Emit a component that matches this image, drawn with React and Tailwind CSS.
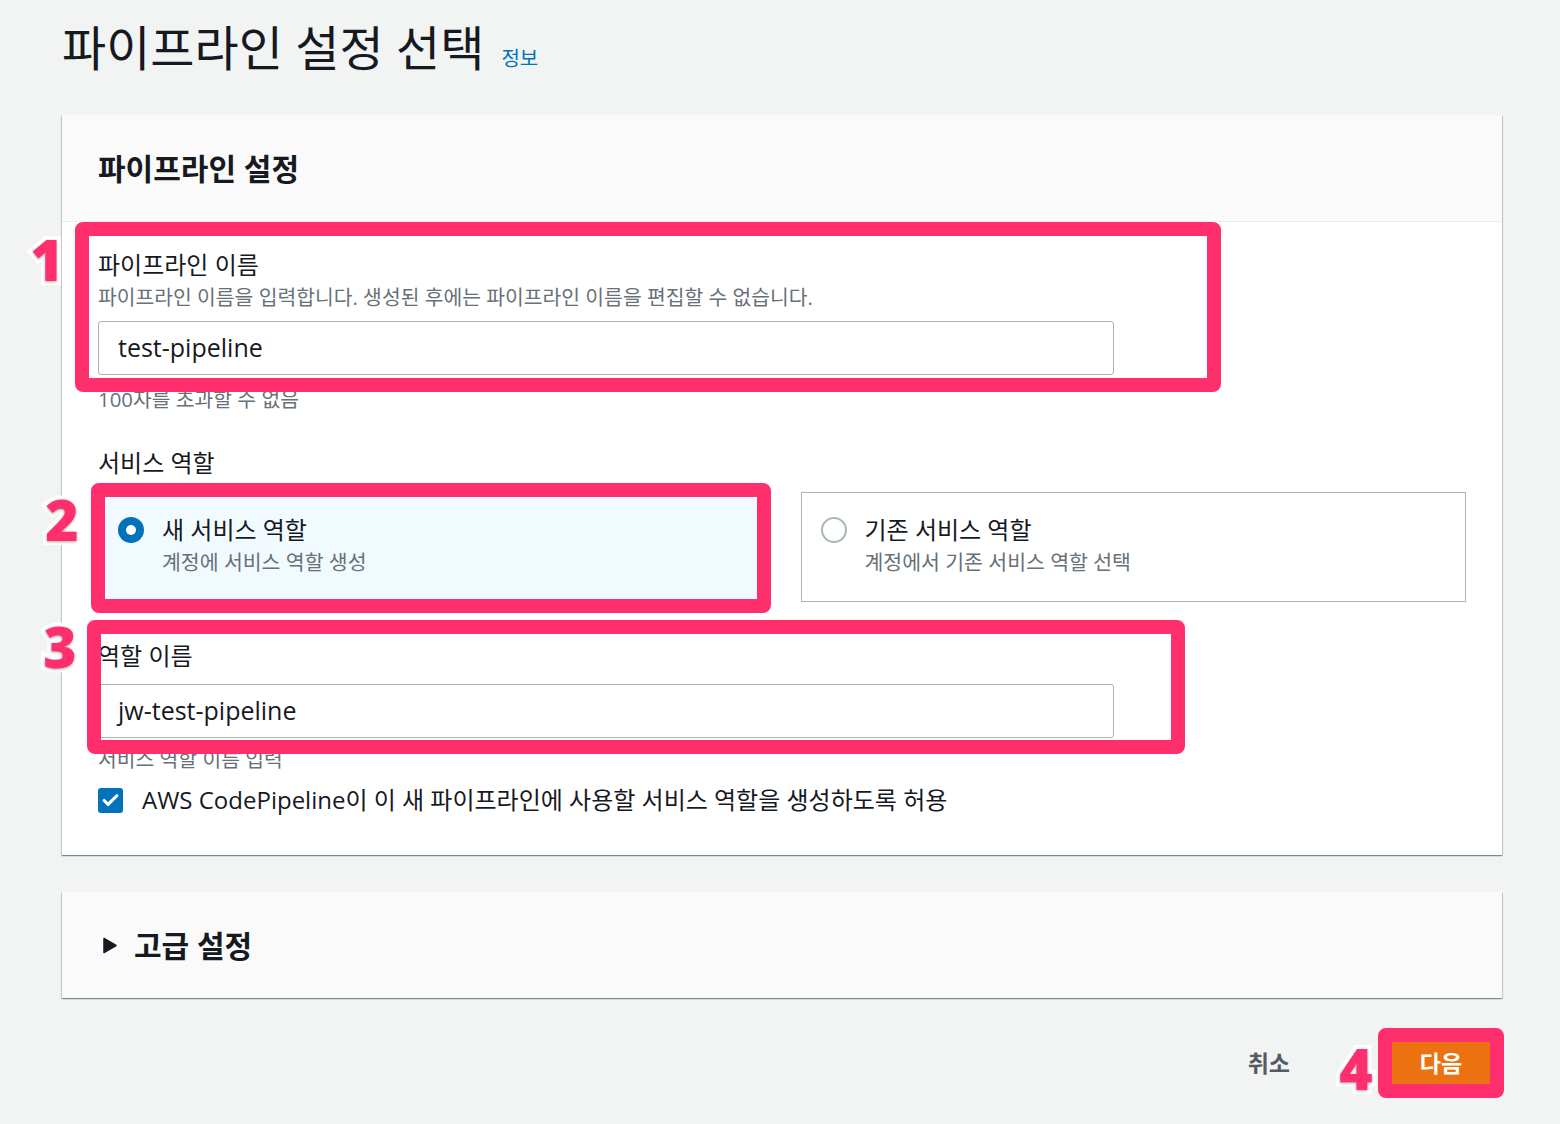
import { Check } from "lucide-react";

const font = 'font-["Open_Sans","Noto_Sans_CJK_KR",sans-serif]';
const panelShadow =
  "shadow-[0_1px_1px_0_rgba(0,28,36,0.3),1px_1px_1px_0_rgba(0,28,36,0.15),-1px_1px_1px_0_rgba(0,28,36,0.15)]";
const digit =
  "absolute flex h-[60px] w-[44px] items-center justify-center text-[57px] leading-none font-extrabold text-[#ff2f6e] [-webkit-text-stroke:8px_white] [paint-order:stroke_fill] [text-shadow:0_1px_3px_rgba(0,0,0,0.35)] pointer-events-none";
const box = "absolute rounded-[8px] border-[14px] border-[#ff2f6e] pointer-events-none";

const RoleTile = ({ selected, title, desc }) => (
  <div
    className={
      "flex h-[110px] items-start gap-[18px] px-[19px] pt-[22px] border " +
      (selected ? "bg-[#f1faff] border-[#00a1c9]" : "bg-white border-[#aab7b8]")
    }
  >
    {selected ? (
      <div className="mt-[2px] flex h-[26px] w-[26px] shrink-0 items-center justify-center rounded-full bg-[#0073bb]">
        <div className="h-[10px] w-[10px] rounded-full bg-white" />
      </div>
    ) : (
      <div className="mt-[2px] h-[26px] w-[26px] shrink-0 rounded-full border-2 border-[#aab7b8] bg-white" />
    )}
    <div>
      <div className="text-[24px] leading-[30px] text-[#16191f]">{title}</div>
      <div className="mt-[4px] text-[20.5px] leading-[26px] text-[#687078]">{desc}</div>
    </div>
  </div>
);

const App = () => {
  return (
    <div className={`relative min-h-[1124px] w-full overflow-hidden bg-[#f2f3f3] pl-[62px] pr-[58px] ${font}`}>
      {/* page title */}
      <div className="flex h-[60px] items-baseline gap-[17px] mt-[18px]">
        <h1 className="text-[48px] leading-[60px] font-normal text-[#16191f]">파이프라인 설정 선택</h1>
        <a className="text-[20px] text-[#0073bb]">정보</a>
      </div>

      {/* pipeline settings panel */}
      <div className={`mt-[37px] bg-white ${panelShadow}`}>
        <div className="flex h-[107px] items-center border-b border-[#eaeded] bg-[#fafafa] px-[36px]">
          <h2 className="text-[30px] font-bold text-[#16191f]">파이프라인 설정</h2>
        </div>

        <div className="px-[36px] pt-[28px] pb-[40px]">
          <div className="text-[24px] leading-[30px] text-[#16191f]">파이프라인 이름</div>
          <div className="mt-[4px] text-[20.4px] leading-[26px] text-[#687078]">
            파이프라인 이름을 입력합니다. 생성된 후에는 파이프라인 이름을 편집할 수 없습니다.
          </div>
          <div className="mt-[11px] flex h-[54px] w-[1016px] items-center rounded-[3px] border border-[#aab7b8] bg-white pl-[19px] text-[25px] text-[#16191f]">
            test-pipeline
          </div>
          <div className="mt-[11px] text-[20.4px] leading-[26px] text-[#687078]">100자를 초과할 수 없음</div>

          <div className="mt-[36px] text-[24px] leading-[30px] text-[#16191f]">서비스 역할</div>
          <div className="mt-[14px] grid grid-cols-2 gap-[37px]">
            <RoleTile selected title="새 서비스 역할" desc="계정에 서비스 역할 생성" />
            <RoleTile title="기존 서비스 역할" desc="계정에서 기존 서비스 역할 선택" />
          </div>

          <div className="mt-[39px] text-[24px] leading-[30px] text-[#16191f]">역할 이름</div>
          <div className="mt-[13px] flex h-[54px] w-[1016px] items-center rounded-[3px] border border-[#aab7b8] bg-white pl-[19px] text-[25px] text-[#16191f]">
            jw-test-pipeline
          </div>
          <div className="mt-[8px] text-[20.4px] leading-[26px] text-[#687078]">서비스 역할 이름 입력</div>

          <div className="mt-[13px] flex h-[30px] items-center gap-[19px]">
            <div className="flex h-[25px] w-[25px] items-center justify-center rounded-[3px] bg-[#0073bb]">
              <Check className="h-[19px] w-[19px] text-white" strokeWidth={4} />
            </div>
            <span className="text-[24px] leading-[30px] text-[#16191f]">
              AWS CodePipeline이 이 새 파이프라인에 사용할 서비스 역할을 생성하도록 허용
            </span>
          </div>
        </div>
      </div>

      {/* advanced settings */}
      <div className={`mt-[37px] flex h-[106px] items-center gap-[17px] bg-[#fafafa] pl-[41px] ${panelShadow}`}>
        <svg width="14" height="17" viewBox="0 0 14 17">
          <path d="M1 1.5 L13 8.5 L1 15.5 Z" fill="#16191f" stroke="#16191f" strokeLinejoin="round" strokeWidth="1.5" />
        </svg>
        <h2 className="text-[30px] font-bold text-[#16191f]">고급 설정</h2>
      </div>

      {/* actions */}
      <div className="mt-[42px] flex h-[46px] items-center justify-end">
        <button className="mr-[90px] text-[23px] font-bold text-[#545b64]">취소</button>
        <button className="flex h-[46px] w-[122px] items-center justify-center bg-[#ec7211] text-[23px] font-bold text-white">
          다음
        </button>
      </div>

      {/* annotation boxes */}
      <div className={`${box} left-[75px] top-[222px] h-[170px] w-[1146px]`} />
      <div className={`${box} left-[91px] top-[483px] h-[130px] w-[680px]`} />
      <div className={`${box} left-[87px] top-[620px] h-[134px] w-[1098px]`} />
      <div className={`${box} left-[1378px] top-[1028px] h-[70px] w-[126px]`} />

      <div className={`${digit} left-[25px] top-[229px]`}>1</div>
      <div className={`${digit} left-[40px] top-[489px]`}>2</div>
      <div className={`${digit} left-[38px] top-[616px]`}>3</div>
      <div className={`${digit} left-[1334px] top-[1038px]`}>4</div>
    </div>
  );
};

export default App;
